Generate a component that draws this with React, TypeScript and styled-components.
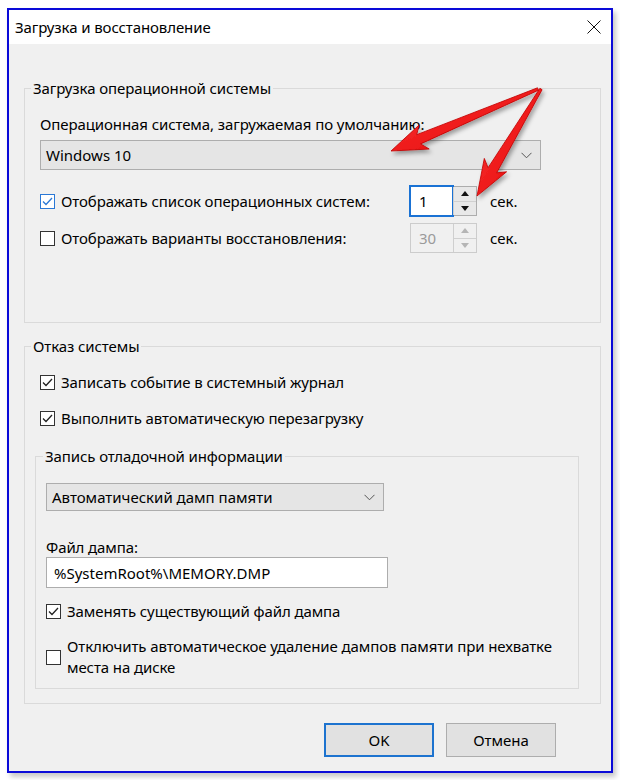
import React from "react";
import styled, { createGlobalStyle, css } from "styled-components";

const FS = 15;

const Global = createGlobalStyle`
  html, body { margin: 0; padding: 0; background: #ffffff; }
  body { font-family: "Noto Sans", "Open Sans", sans-serif; color: #000; }
`;

const Page = styled.div`
  position: relative;
  width: 620px;
  height: 780px;
  padding: 8px 0 0 7px;
  box-sizing: border-box;
`;

const Dialog = styled.div`
  width: 606px;
  height: 765px;
  box-sizing: border-box;
  border: 2px solid #0a0ad8;
  box-shadow: 3px 4px 5px rgba(0, 0, 0, 0.22);
  display: flex;
  flex-direction: column;
  background: #f0f0f0;
`;

const TitleBar = styled.div`
  height: 34px;
  background: #ffffff;
  display: flex;
  align-items: center;
  justify-content: space-between;
  padding: 0 10px 0 6px;
  flex-shrink: 0;
`;

const TitleText = styled.span`
  font-size: ${FS}px;
  letter-spacing: -0.1px;
`;

const Body = styled.div`
  flex: 1;
  display: flex;
  flex-direction: column;
  padding: 34px 10px 0 15px;
`;

const Group = styled.fieldset<{ $h: number; $mt?: number }>`
  margin: ${(p) => p.$mt ?? 0}px 0 0 0;
  padding: 0;
  min-inline-size: 0;
  height: ${(p) => p.$h}px;
  box-sizing: border-box;
  border: 1px solid #dadada;
  border-radius: 0;
`;

const Legend = styled.legend<{ $ml?: number }>`
  font-size: ${FS}px;
  line-height: 20px;
  padding: 0 2px;
  margin-left: ${(p) => p.$ml ?? 6}px;
  letter-spacing: -0.1px;
`;

const Content = styled.div<{ $pl: number; $pr?: number }>`
  display: flex;
  flex-direction: column;
  padding: 0 ${(p) => p.$pr ?? 0}px 0 ${(p) => p.$pl}px;
`;

const Label = styled.div<{ $mt: number; $lh?: number }>`
  font-size: ${FS}px;
  line-height: ${(p) => p.$lh ?? 20}px;
  margin-top: ${(p) => p.$mt}px;
  letter-spacing: -0.1px;
`;

const Combo = styled.div<{ $w: number; $h: number; $mt: number }>`
  width: ${(p) => p.$w}px;
  height: ${(p) => p.$h}px;
  margin-top: ${(p) => p.$mt}px;
  box-sizing: border-box;
  background: #e5e5e5;
  border: 1px solid #adadad;
  display: flex;
  align-items: center;
  justify-content: space-between;
  padding: 0 8px 0 5px;
  font-size: ${FS}px;
`;

const TextInput = styled.div<{ $w: number; $h: number }>`
  width: ${(p) => p.$w}px;
  height: ${(p) => p.$h}px;
  box-sizing: border-box;
  background: #ffffff;
  border: 1px solid #adadad;
  display: flex;
  align-items: center;
  padding: 0 7px;
  font-size: ${FS}px;
`;

const Row = styled.div<{ $mt: number; $ml?: number; $h?: number }>`
  display: flex;
  align-items: center;
  margin-top: ${(p) => p.$mt}px;
  margin-left: ${(p) => p.$ml ?? 0}px;
  height: ${(p) => p.$h ?? 20}px;
`;

const CheckLabel = styled.label<{ $w?: number }>`
  display: flex;
  align-items: center;
  gap: 6px;
  font-size: ${FS}px;
  letter-spacing: -0.1px;
  width: ${(p) => (p.$w ? `${p.$w}px` : "auto")};
`;

const Box = styled.span<{ $focus?: boolean }>`
  width: 15px;
  height: 15px;
  box-sizing: border-box;
  border: 1px solid ${(p) => (p.$focus ? "#2a78d6" : "#333333")};
  background: #ffffff;
  display: inline-flex;
  align-items: center;
  justify-content: center;
  flex-shrink: 0;
`;

const MultiText = styled.span`
  font-size: ${FS}px;
  line-height: 21px;
  letter-spacing: -0.1px;
`;

const Spinner = styled.div<{ $disabled?: boolean }>`
  width: 67px;
  height: 30px;
  display: flex;
  box-sizing: border-box;
  border: 1px solid ${(p) => (p.$disabled ? "#cccccc" : "#adadad")};
  background: ${(p) => (p.$disabled ? "#f0f0f0" : "#ffffff")};
`;

const SpinValue = styled.div<{ $disabled?: boolean }>`
  flex: 1;
  display: flex;
  align-items: center;
  padding-left: 8px;
  font-size: ${FS}px;
  color: ${(p) => (p.$disabled ? "#9a9a9a" : "#000")};
  ${(p) =>
    !p.$disabled &&
    css`
      outline: 1px solid #1a72d4;
      outline-offset: 0px;
      margin: -1px 0 -1px -1px;
      border: 1px solid #1a72d4;
    `}
`;

const SpinButtons = styled.div`
  width: 22px;
  display: flex;
  flex-direction: column;
  border-left: 1px solid #cfcfcf;
`;

const SpinBtn = styled.div<{ $disabled?: boolean }>`
  flex: 1;
  display: flex;
  align-items: center;
  justify-content: center;
  background: ${(p) => (p.$disabled ? "#f0f0f0" : "#e8e8e8")};
  & + & {
    border-top: 1px solid #d0d0d0;
  }
`;

const Unit = styled.span`
  margin-left: 13px;
  font-size: ${FS}px;
`;

const Footer = styled.div`
  display: flex;
  justify-content: flex-end;
  gap: 12px;
  margin-top: 19px;
  padding-right: 45px;
`;

const Button = styled.button<{ $primary?: boolean }>`
  width: 110px;
  height: 34px;
  box-sizing: border-box;
  background: #e1e1e1;
  border: ${(p) => (p.$primary ? "2px solid #1d73cf" : "1px solid #adadad")};
  font-family: "Noto Sans", "Open Sans", sans-serif;
  font-size: ${FS}px;
  color: #000;
  padding: 0;
`;

const Overlay = styled.svg`
  position: absolute;
  left: 0;
  top: 0;
  pointer-events: none;
`;

const Check = ({ color = "#222" }: { color?: string }) => (
  <svg width="11" height="9" viewBox="0 0 11 9">
    <path d="M1 4.5 L4 7.5 L10 1" fill="none" stroke={color} strokeWidth="1.3" />
  </svg>
);

const CheckBox = ({ checked, focus }: { checked?: boolean; focus?: boolean }) => (
  <Box $focus={focus}>{checked && <Check color={focus ? "#2a78d6" : "#222"} />}</Box>
);

const Chevron = () => (
  <svg width="11" height="7" viewBox="0 0 11 7">
    <path d="M0.5 0.8 L5.5 5.8 L10.5 0.8" fill="none" stroke="#555" strokeWidth="1" />
  </svg>
);

const Tri = ({ up, color }: { up?: boolean; color: string }) => (
  <svg width="8" height="5" viewBox="0 0 8 5">
    <path d={up ? "M0 5 L4 0 L8 5 Z" : "M0 0 L4 5 L8 0 Z"} fill={color} />
  </svg>
);

const SpinBox = ({ value, disabled }: { value: string; disabled?: boolean }) => {
  const c = disabled ? "#b5b5b5" : "#111";
  return (
    <Spinner $disabled={disabled}>
      <SpinValue $disabled={disabled}>{value}</SpinValue>
      <SpinButtons>
        <SpinBtn $disabled={disabled}>
          <Tri up color={c} />
        </SpinBtn>
        <SpinBtn $disabled={disabled}>
          <Tri color={c} />
        </SpinBtn>
      </SpinButtons>
    </Spinner>
  );
};

function arrowPoints(tx: number, ty: number, px: number, py: number) {
  const dx = px - tx;
  const dy = py - ty;
  const len = Math.hypot(dx, dy);
  const ux = dx / len;
  const uy = dy / len;
  const nx = -uy;
  const ny = ux;
  const headLen = 30;
  const hx = px - ux * headLen;
  const hy = py - uy * headLen;
  const bx = hx - ux * 6;
  const by = hy - uy * 6;
  const pts: [number, number][] = [
    [tx + nx * 1.3, ty + ny * 1.3],
    [hx + nx * 5, hy + ny * 5],
    [bx + nx * 13, by + ny * 13],
    [px, py],
    [bx - nx * 13, by - ny * 13],
    [hx - nx * 5, hy - ny * 5],
    [tx - nx * 1.3, ty - ny * 1.3],
  ];
  return pts.map((p) => `${p[0].toFixed(1)},${p[1].toFixed(1)}`).join(" ");
}

const Arrows = () => (
  <Overlay width="620" height="780" viewBox="0 0 620 780">
    <defs>
      <filter id="sh" x="-20%" y="-20%" width="140%" height="140%">
        <feDropShadow dx="2" dy="3" stdDeviation="2" floodColor="#000" floodOpacity="0.35" />
      </filter>
      <linearGradient id="rg" x1="0" y1="0" x2="1" y2="1">
        <stop offset="0" stopColor="#ff3b3b" />
        <stop offset="1" stopColor="#e00000" />
      </linearGradient>
    </defs>
    <g filter="url(#sh)">
      <polygon points={arrowPoints(538, 89, 391, 151)} fill="url(#rg)" stroke="#c00000" strokeWidth="0.8" />
      <polygon points={arrowPoints(541, 89, 477, 196)} fill="url(#rg)" stroke="#c00000" strokeWidth="0.8" />
    </g>
  </Overlay>
);

export default function App() {
  return (
    <Page>
      <Global />
      <Dialog>
        <TitleBar>
          <TitleText>Загрузка и восстановление</TitleText>
          <svg width="14" height="14" viewBox="0 0 14 14">
            <path d="M0.5 0.5 L13.5 13.5 M13.5 0.5 L0.5 13.5" stroke="#111" strokeWidth="1" />
          </svg>
        </TitleBar>
        <Body>
          <Group $h={245}>
            <Legend>Загрузка операционной системы</Legend>
            <Content $pl={15}>
              <Label $mt={16}>Операционная система, загружаемая по умолчанию:</Label>
              <Combo $w={501} $h={30} $mt={6}>
                <span>Windows 10</span>
                <Chevron />
              </Combo>
              <Row $mt={16} $h={30}>
                <CheckLabel $w={370}>
                  <CheckBox checked focus />
                  Отображать список операционных систем:
                </CheckLabel>
                <SpinBox value="1" />
                <Unit>сек.</Unit>
              </Row>
              <Row $mt={7} $h={30}>
                <CheckLabel $w={370}>
                  <CheckBox />
                  Отображать варианты восстановления:
                </CheckLabel>
                <SpinBox value="30" disabled />
                <Unit>сек.</Unit>
              </Row>
            </Content>
          </Group>
          <Group $h={368} $mt={13}>
            <Legend>Отказ системы</Legend>
            <Content $pl={10} $pr={21}>
              <Row $mt={16} $ml={5}>
                <CheckLabel>
                  <CheckBox checked />
                  Записать событие в системный журнал
                </CheckLabel>
              </Row>
              <Row $mt={16} $ml={5}>
                <CheckLabel>
                  <CheckBox checked />
                  Выполнить автоматическую перезагрузку
                </CheckLabel>
              </Row>
              <Group $h={243} $mt={18}>
                <Legend $ml={7}>Запись отладочной информации</Legend>
                <Content $pl={10}>
                  <Combo $w={338} $h={28} $mt={17}>
                    <span>Автоматический дамп памяти</span>
                    <Chevron />
                  </Combo>
                  <Label $mt={27} $lh={19}>Файл дампа:</Label>
                  <TextInput $w={342} $h={31}>%SystemRoot%\MEMORY.DMP</TextInput>
                  <Row $mt={13}>
                    <CheckLabel>
                      <CheckBox checked />
                      Заменять существующий файл дампа
                    </CheckLabel>
                  </Row>
                  <Row $mt={15} $h={42}>
                    <CheckLabel>
                      <CheckBox />
                      <MultiText>
                        Отключить автоматическое удаление дампов памяти при нехватке
                        <br />
                        места на диске
                      </MultiText>
                    </CheckLabel>
                  </Row>
                </Content>
              </Group>
            </Content>
          </Group>
          <Footer>
            <Button $primary>OK</Button>
            <Button>Отмена</Button>
          </Footer>
        </Body>
      </Dialog>
      <Arrows />
    </Page>
  );
}
